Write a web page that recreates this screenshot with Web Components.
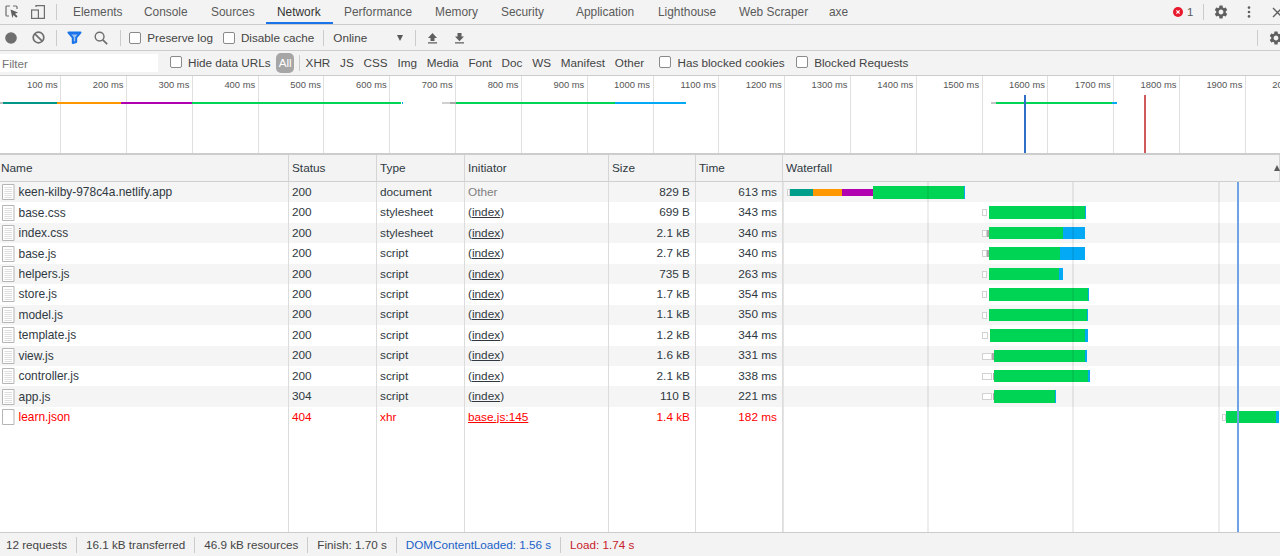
<!DOCTYPE html>
<html>
<head>
<meta charset="utf-8">
<title>Network</title>
<style>
  html, body { margin: 0; height: 100%; background: #fff; overflow: hidden; }
  body { font-family: "Liberation Sans", Arial, sans-serif; font-size: 12px; color: #303942; }
</style>
</head>
<body>
<dt-app>
  <dt-tabbar>
    <dt-tab style="width:71px">Elements</dt-tab>
    <dt-tab style="width:67px">Console</dt-tab>
    <dt-tab style="width:66px">Sources</dt-tab>
    <dt-tab style="width:67px" active>Network</dt-tab>
    <dt-tab style="width:91px">Performance</dt-tab>
    <dt-tab style="width:66px">Memory</dt-tab>
    <dt-tab style="width:75px">Security</dt-tab>
    <dt-tab style="width:82px">Application</dt-tab>
    <dt-tab style="width:81px">Lighthouse</dt-tab>
    <dt-tab style="width:90px">Web Scraper</dt-tab>
    <dt-tab style="width:44px">axe</dt-tab>
  </dt-tabbar>
  <dt-toolbar></dt-toolbar>
  <dt-filterbar></dt-filterbar>
  <dt-overview></dt-overview>
  <dt-table>
    <dt-row name="keen-kilby-978c4a.netlify.app" status="200" type="document" init="Other" size="829 B" time="613 ms"
      bars="box:787-790 teal:790-813.3 orange:813.3-841.7 purple:841.7-873 green:873-964 blue:964-965.3"></dt-row>
    <dt-row name="base.css" status="200" type="stylesheet" init="(index)" size="699 B" time="343 ms"
      bars="box:982.3-987.3 green:989-1084.7 blue:1084.7-1086"></dt-row>
    <dt-row name="index.css" status="200" type="stylesheet" init="(index)" size="2.1 kB" time="340 ms"
      bars="box:982.3-987 wait:987-989 green:989-1063 blue:1063-1085"></dt-row>
    <dt-row name="base.js" status="200" type="script" init="(index)" size="2.7 kB" time="340 ms"
      bars="box:982.3-987 wait:987-989 green:989-1059.7 blue:1059.7-1085"></dt-row>
    <dt-row name="helpers.js" status="200" type="script" init="(index)" size="735 B" time="263 ms"
      bars="box:982.3-987.3 green:989-1059.3 blue:1059.3-1062.7"></dt-row>
    <dt-row name="store.js" status="200" type="script" init="(index)" size="1.7 kB" time="354 ms"
      bars="box:982.3-987.3 green:989-1088 blue:1088-1089"></dt-row>
    <dt-row name="model.js" status="200" type="script" init="(index)" size="1.1 kB" time="350 ms"
      bars="box:982.3-987.3 green:989-1087 blue:1087-1088"></dt-row>
    <dt-row name="template.js" status="200" type="script" init="(index)" size="1.2 kB" time="344 ms"
      bars="box:982.3-988 green:990-1085.3 blue:1085.3-1088"></dt-row>
    <dt-row name="view.js" status="200" type="script" init="(index)" size="1.6 kB" time="331 ms"
      bars="box:982.3-991.7 wait:991.7-993.7 green:993.7-1085.3 blue:1085.3-1087"></dt-row>
    <dt-row name="controller.js" status="200" type="script" init="(index)" size="2.1 kB" time="338 ms"
      bars="box:982.3-992.5 wait:992.5-994 green:994-1088 blue:1088-1090"></dt-row>
    <dt-row name="app.js" status="304" type="script" init="(index)" size="110 B" time="221 ms"
      bars="box:982.3-992.5 wait:992.5-993.7 green:993.7-1055 blue:1055-1056"></dt-row>
    <dt-row error name="learn.json" status="404" type="xhr" init="base.js:145" size="1.4 kB" time="182 ms"
      bars="box:1221.7-1225.7 green:1225.7-1275.7 blue:1275.7-1279"></dt-row>
    <dt-row filler></dt-row>
  </dt-table>
  <dt-statusbar>
    <span>12 requests</span>
    <span>16.1 kB transferred</span>
    <span>46.9 kB resources</span>
    <span>Finish: 1.70 s</span>
    <span style="color:#1a62c9">DOMContentLoaded: 1.56 s</span>
    <span style="color:#c8202a">Load: 1.74 s</span>
  </dt-statusbar>
</dt-app>

<script>
const GEAR = `<path d="M19.14 12.94c.04-.3.06-.61.06-.94 0-.32-.02-.64-.07-.94l2.03-1.58c.18-.14.23-.41.12-.61l-1.92-3.32c-.12-.22-.37-.29-.59-.22l-2.39.96c-.5-.38-1.03-.7-1.62-.94l-.36-2.54c-.04-.24-.24-.41-.48-.41h-3.84c-.24 0-.43.17-.47.41l-.36 2.54c-.59.24-1.13.57-1.62.94l-2.39-.96c-.22-.08-.47 0-.59.22L2.74 8.87c-.12.21-.08.47.12.61l2.03 1.58c-.05.3-.09.63-.09.94s.02.64.07.94l-2.03 1.58c-.18.14-.23.41-.12.61l1.92 3.32c.12.22.37.29.59.22l2.39-.96c.5.38 1.03.7 1.62.94l.36 2.54c.05.24.24.41.48.41h3.84c.24 0 .44-.17.47-.41l.36-2.54c.59-.24 1.13-.56 1.62-.94l2.39.96c.22.08.47 0 .59-.22l1.92-3.32c.12-.22.07-.47-.12-.61l-2.01-1.58zM12 15.6c-1.98 0-3.6-1.62-3.6-3.6s1.62-3.6 3.6-3.6 3.6 1.62 3.6 3.6-1.62 3.6-3.6 3.6z"/>`;

class DtElement extends HTMLElement {
  constructor() {
    super();
    this.attachShadow({ mode: "open" });
  }
  connectedCallback() {
    this.shadowRoot.innerHTML = this.render();
  }
}

class DtApp extends DtElement {
  render() {
    return `<style>
      :host { display: flex; flex-direction: column; height: 556px; width: 1280px; overflow: hidden; }
    </style><slot></slot>`;
  }
}

class DtTabbar extends DtElement {
  render() {
    return `<style>
      :host { display: flex; align-items: stretch; height: 24px; background: #f3f3f3; border-bottom: 1px solid #ccc; flex: none; position: relative; overflow: hidden; }
      .icons { display: flex; align-items: center; width: 56px; flex: none; }
      .sep { width: 1px; height: 16px; background: #ccc; align-self: center; flex: none; }
      .tabs { display: flex; flex: 1; padding-left: 5px; }
      .right { display: flex; align-items: center; flex: none; color: #5a5a5a; font-size: 11.5px; margin-right: -3px; }
      svg { display: block; flex: none; }
    </style>
    <div class="icons">
      <svg style="margin-left:5px" width="14" height="14" viewBox="0 0 14 14" fill="none">
        <path d="M5 1H2a1 1 0 0 0-1 1v8a1 1 0 0 0 1 1h2M8 1h3a1 1 0 0 1 1 1v2" stroke="#6e6e6e" stroke-width="1.2"/>
        <path d="M5.5 4.5l7.5 3-3 1.2 2.6 2.6-1.4 1.4-2.6-2.6-1.2 3z" fill="#5f5f5f"/>
      </svg>
      <svg style="margin-left:11px" width="16" height="16" viewBox="0 0 16 16" fill="none" stroke="#6e6e6e" stroke-width="1.2">
        <path d="M6 3V1.6h8.4v12.8H9"/>
        <rect x="1.6" y="6" width="6.8" height="8.4"/>
      </svg>
    </div>
    <div class="sep"></div>
    <div class="tabs"><slot></slot></div>
    <div class="right">
      <svg width="10" height="10" viewBox="0 0 11 11"><circle cx="5.5" cy="5.5" r="5.5" fill="#e8192c"/><path d="M3.7 3.7l3.6 3.6M7.3 3.7L3.7 7.3" stroke="#fff" stroke-width="1.3"/></svg>
      <span style="margin:0 9.6px 0 4px">1</span>
      <div class="sep"></div>
      <svg style="margin-left:9px" width="16" height="16" viewBox="0 0 24 24" fill="#5f5f5f">${GEAR}</svg>
      <svg style="margin-left:18px" width="4" height="12" viewBox="0 0 4 12" fill="#5f5f5f"><circle cx="2" cy="1.6" r="1.3"/><circle cx="2" cy="6" r="1.3"/><circle cx="2" cy="10.4" r="1.3"/></svg>
      <svg style="margin-left:21px" width="11" height="11" viewBox="0 0 11 11" stroke="#5f5f5f" stroke-width="1.4"><path d="M1 1l9 9M10 1l-9 9"/></svg>
    </div>`;
  }
}

class DtTab extends DtElement {
  render() {
    const active = this.hasAttribute("active");
    return `<style>
      :host { display: flex; align-items: center; padding-left: 11px; height: 24px; font-size: 11.9px; white-space: nowrap; color: ${active ? "#333" : "#5a5a5a"}; box-sizing: border-box; flex: none; ${active ? "box-shadow: inset 0 -2px 0 #1a73e8;" : ""} }
    </style><slot></slot>`;
  }
}

class DtCheck extends DtElement {
  render() {
    return `<style>
      :host { display: inline-flex; align-items: center; gap: 6px; white-space: nowrap; font-size: 11.7px; color: #444; }
      i { display: block; width: 10px; height: 10px; border: 1px solid #8a8a8a; border-radius: 2px; background: #fff; flex: none; }
    </style><i></i><slot></slot>`;
  }
}

class DtToolbar extends DtElement {
  render() {
    return `<style>
      :host { display: flex; align-items: center; height: 25px; background: #f3f3f3; border-bottom: 1px solid #ccc; flex: none; color: #444; overflow: hidden; }
      .sep { width: 1px; height: 16px; background: #ccc; flex: none; }
      svg { display: block; flex: none; }
      .select { width: 91px; padding: 0 12.5px 0 9px; box-sizing: border-box; display: flex; align-items: center; justify-content: space-between; font-size: 11.7px; flex: none; }
      .caret { width: 0; height: 0; border-left: 3.5px solid transparent; border-right: 3.5px solid transparent; border-top: 6px solid #5a5a5a; }
    </style>
    <svg style="margin-left:5px" width="12" height="12" viewBox="0 0 12 12"><circle cx="6" cy="6" r="5.8" fill="#6e6e6e"/></svg>
    <svg style="margin-left:15px" width="13" height="13" viewBox="0 0 13 13" fill="none" stroke="#6e6e6e" stroke-width="1.7"><circle cx="6.5" cy="6.5" r="5.3"/><path d="M2.8 2.8l7.4 7.4"/></svg>
    <div class="sep" style="margin-left:10.5px"></div>
    <svg style="margin-left:10.5px" width="15" height="13" viewBox="0 0 15 13"><path d="M1.5 1.5h12L9.2 6.7V11l-3.4 1V6.7z" fill="#9ec3f2" stroke="#1a73e8" stroke-width="2" stroke-linejoin="round"/><path d="M1.5 1h12l-1.5 2.4H3z" fill="#1a73e8"/></svg>
    <svg style="margin-left:12px" width="14" height="14" viewBox="0 0 14 14" fill="none" stroke="#6e6e6e" stroke-width="1.4"><circle cx="5.6" cy="5.6" r="4.4"/><path d="M8.8 8.8l4.4 4.4" stroke-width="1.7"/></svg>
    <div class="sep" style="margin-left:11.5px"></div>
    <dt-check style="margin-left:8.8px">Preserve log</dt-check>
    <dt-check style="margin-left:10px">Disable cache</dt-check>
    <div class="sep" style="margin-left:9px"></div>
    <div class="select"><span>Online</span><span class="caret"></span></div>
    <div class="sep"></div>
    <svg style="margin-left:11px" width="11" height="12" viewBox="0 0 11 12" fill="#5f5f5f"><path d="M5.5 1L10 6H7.5v3h-4V6H1zM1 10.2h9v1.3H1z"/></svg>
    <svg style="margin-left:16px" width="11" height="12" viewBox="0 0 11 12" fill="#5f5f5f"><path d="M3.5 1h4v3.5H10L5.5 9.2 1 4.5h2.5zM1 10.2h9v1.3H1z"/></svg>
    <div class="sep" style="margin-left:auto"></div>
    <svg style="margin:0 -4px 0 10px" width="16" height="16" viewBox="0 0 24 24" fill="#5f5f5f">${GEAR}</svg>`;
  }
}

class DtFilterbar extends DtElement {
  render() {
    const types = ["XHR", "JS", "CSS", "Img", "Media", "Font", "Doc", "WS", "Manifest", "Other"];
    return `<style>
      :host { display: flex; align-items: center; height: 24px; background: #f3f3f3; border-bottom: 1px solid #ccc; flex: none; font-size: 11.7px; color: #444; }
      .input { width: 158px; height: 18px; background: #fff; color: #757575; padding-left: 2px; box-sizing: border-box; line-height: 19px; flex: none; }
      .all { background: #a6a6a6; color: #fff; border-radius: 5px; width: 18px; height: 20px; line-height: 20px; text-align: center; margin-left: 5.7px; flex: none; }
      .sep { width: 1px; height: 16px; background: #ccc; margin: 0 1px 0 4.5px; flex: none; }
      .t { padding: 0 4.92px; flex: none; margin-bottom: 2px; }
      dt-check { margin-bottom: 2px; }
    </style>
    <div class="input">Filter</div>
    <dt-check style="margin-left:12px">Hide data URLs</dt-check>
    <div class="all">All</div>
    <div class="sep"></div>
    ${types.map(t => `<span class="t">${t}</span>`).join("")}
    <dt-check style="margin-left:10.5px">Has blocked cookies</dt-check>
    <dt-check style="margin-left:11.5px">Blocked Requests</dt-check>`;
  }
}

class DtOverview extends DtElement {
  render() {
    const ticks = [];
    for (let i = 1; i <= 20; i++) ticks.push(`<div class="tick"><span>${i * 100} ms</span></div>`);
    // lines of the overview graph: [colour, from, to]
    const segs = [
      ["#bdbdbd", 0, 3], ["#009688", 3, 57], ["#ff9800", 57, 121], ["#b000b0", 121, 191.6], ["#00d455", 191.6, 401.5], ["#03a9f4", 401.5, 402.5],
      ["#d0d0d0", 442, 450], ["#aaa", 450, 455.7], ["#00d455", 455.7, 615], ["#03a9f4", 615, 686],
      ["#c4c4c4", 991, 996], ["#00d455", 996, 1112], ["#03a9f4", 1112, 1116.5]
    ];
    return `<style>
      :host { display: block; height: 79px; background: #fff; border-bottom: 2px solid #ccc; flex: none; position: relative; overflow: hidden; box-sizing: border-box; }
      .ticks { display: flex; height: 100%; margin-left: -4.6px; }
      .tick { flex: none; width: 65.82px; box-sizing: border-box; border-right: 1px solid #e0e0e0; text-align: right; font-size: 9.4px; color: #555; padding: 3px 2.5px 0 0; white-space: nowrap; }
      .tick span { display: block; margin-left: -20px; line-height: 11px; }
      .seg { position: absolute; top: 26px; height: 2px; }
      .mark { position: absolute; top: 19px; bottom: 0; width: 2px; }
    </style>
    <div class="ticks">${ticks.join("")}</div>
    ${segs.map(s => `<div class="seg" style="background:${s[0]};left:${s[1]}px;width:${s[2] - s[1]}px"></div>`).join("")}
    <div class="mark" style="left:1024px;background:#2f6fc8"></div>
    <div class="mark" style="left:1144px;background:#d05a5a"></div>`;
  }
}

const COLS = "289px 88px 88px 144px 87px 87px 1fr";
const CELL_CSS = `
  .c { box-sizing: border-box; border-right: 1px solid #dcdcdc; padding: 0 3px 0 3px; white-space: nowrap; overflow: hidden; }
  .c:last-child { border-right: 0; }
`;

class DtTable extends DtElement {
  render() {
    const heads = ["Name", "Status", "Type", "Initiator", "Size", "Time", "Waterfall"];
    return `<style>
      :host { display: flex; flex-direction: column; flex: 1; min-height: 0; background: #fff; position: relative; font-size: 11.8px; }
      .head { display: grid; grid-template-columns: ${COLS}; height: 26px; line-height: 27px; background: #f3f3f3; border-bottom: 1px solid #d0d0d0; flex: none; color: #303942; position: relative; }
      ${CELL_CSS}
      .c { border-right-color: #d5d5d5; }
      .c:first-child { padding-left: 1px; }
      .arrow { position: absolute; right: 0; top: 10px; width: 0; height: 0; border-left: 3.5px solid transparent; border-right: 3.5px solid transparent; border-bottom: 6px solid #5a5a5a; }
      .body { flex: 1; display: flex; flex-direction: column; position: relative; min-height: 0; }
      .line { position: absolute; top: 0; bottom: 0; width: 2px; background: rgba(0,0,0,.07); }
      .dcl { background: #6ea4e6; }
    </style>
    <div class="head">${heads.map(h => `<div class="c">${h}</div>`).join("")}<span class="arrow"></span></div>
    <div class="body">
      <slot></slot>
      <div class="line" style="left:927px"></div>
      <div class="line" style="left:1072px"></div>
      <div class="line" style="left:1217.5px"></div>
      <div class="line dcl" style="left:1237px"></div>
    </div>`;
  }
}

class DtRow extends DtElement {
  connectedCallback() {
    // striping needs the row's index among its siblings
    this.index = [...this.parentNode.children].indexOf(this);
    super.connectedCallback();
  }
  render() {
    if (this.hasAttribute("filler")) {
      return `<style>
        :host { display: grid; grid-template-columns: ${COLS}; flex: 1; background: #fff; }
        ${CELL_CSS}
        .c:last-child { box-shadow: inset 1px 0 0 #e4e4e4; }
      </style>${"<div class='c'></div>".repeat(7)}`;
    }
    const a = n => this.getAttribute(n) || "";
    const err = this.hasAttribute("error");
    const colors = { teal: "#009e8b", orange: "#ff9800", purple: "#b000b0", green: "#00d455", blue: "#03a9f4" };
    const init = a("init");
    const initHtml = init === "Other" ? `<span style="color:#808080">Other</span>`
      : init === "(index)" ? `(<u>index</u>)` : `<u>${init}</u>`;
    const bars = a("bars").split(" ").map(s => {
      const [kind, range] = s.split(":");
      const [from, to] = range.split("-").map(Number);
      const x = `left:${from - 783}px;width:${to - from}px`;
      if (kind === "box") return `<b class="box" style="${x}"></b>`;
      if (kind === "wait") return `<b class="wait" style="${x}"></b>`;
      const thin = a("name").startsWith("keen") && kind !== "green" && kind !== "blue";
      return `<b class="bar ${thin ? "thin" : ""}" style="${x};background:${colors[kind]}"></b>`;
    }).join("");
    // the last row's icon is an empty page, the others have text lines
    const icon = err
      ? `<svg width="13" height="16" viewBox="0 0 13 16"><path d="M.5.5h11.5v15H.5z" fill="#fff" stroke="#b5b5b5"/></svg>`
      : `<svg width="13" height="16" viewBox="0 0 13 16"><path d="M.5.5h11.5v15H.5z" fill="#fff" stroke="#b5b5b5"/><path d="M2.5 3.5h7.5M2.5 5.5h7.5M2.5 7.5h7.5M2.5 9.5h7.5M2.5 11.5h7.5M2.5 13.5h7.5" stroke="#dedede"/></svg>`;
    return `<style>
      :host { display: grid; grid-template-columns: ${COLS}; height: 20.45px; line-height: 20px; flex: none; background: ${this.index % 2 ? "#fff" : "#f5f5f5"}; color: ${err ? "#f00" : "#303942"}; }
      ${CELL_CSS}
      .name { display: flex; align-items: center; gap: 4px; padding-left: 1.5px; font-size: 11.95px; }
      svg { display: block; flex: none; }
      .c:not(.name):not(.wf) { margin-top: -0.25px; }
      .num { text-align: right; padding-right: 5px; }
      .wf { position: relative; overflow: visible; padding: 0; box-shadow: inset 1px 0 0 #e4e4e4; }
      .bar { position: absolute; top: 4px; height: 12.5px; }
      .bar.thin { top: 7px; height: 7px; }
      .box { position: absolute; top: 7px; height: 7px; box-sizing: border-box; border: 1.5px solid #d2d2d2; background: #fff; }
      .wait { position: absolute; top: 7px; height: 7px; background: #b0a8a8; }
      u { text-underline-offset: 1px; }
    </style>
    <div class="c name">${icon}<span>${a("name")}</span></div>
    <div class="c">${a("status")}</div>
    <div class="c">${a("type")}</div>
    <div class="c">${initHtml}</div>
    <div class="c num">${a("size")}</div>
    <div class="c num">${a("time")}</div>
    <div class="c wf">${bars}</div>`;
  }
}

class DtStatusbar extends DtElement {
  render() {
    return `<style>
      :host { display: flex; align-items: center; height: 24px; background: #f3f3f3; border-top: 1px solid #ccc; flex: none; font-size: 11.68px; color: #444; box-sizing: border-box; }
      ::slotted(span) { padding: 0 9px; border-right: 1px solid #ccc; line-height: 16px; white-space: nowrap; }
      ::slotted(span:first-child) { padding-left: 6px; }
      ::slotted(span:last-child) { border-right: 0; }
    </style><slot></slot>`;
  }
}

customElements.define("dt-app", DtApp);
customElements.define("dt-tabbar", DtTabbar);
customElements.define("dt-tab", DtTab);
customElements.define("dt-check", DtCheck);
customElements.define("dt-toolbar", DtToolbar);
customElements.define("dt-filterbar", DtFilterbar);
customElements.define("dt-overview", DtOverview);
customElements.define("dt-table", DtTable);
customElements.define("dt-row", DtRow);
customElements.define("dt-statusbar", DtStatusbar);
</script>
</body>
</html>
